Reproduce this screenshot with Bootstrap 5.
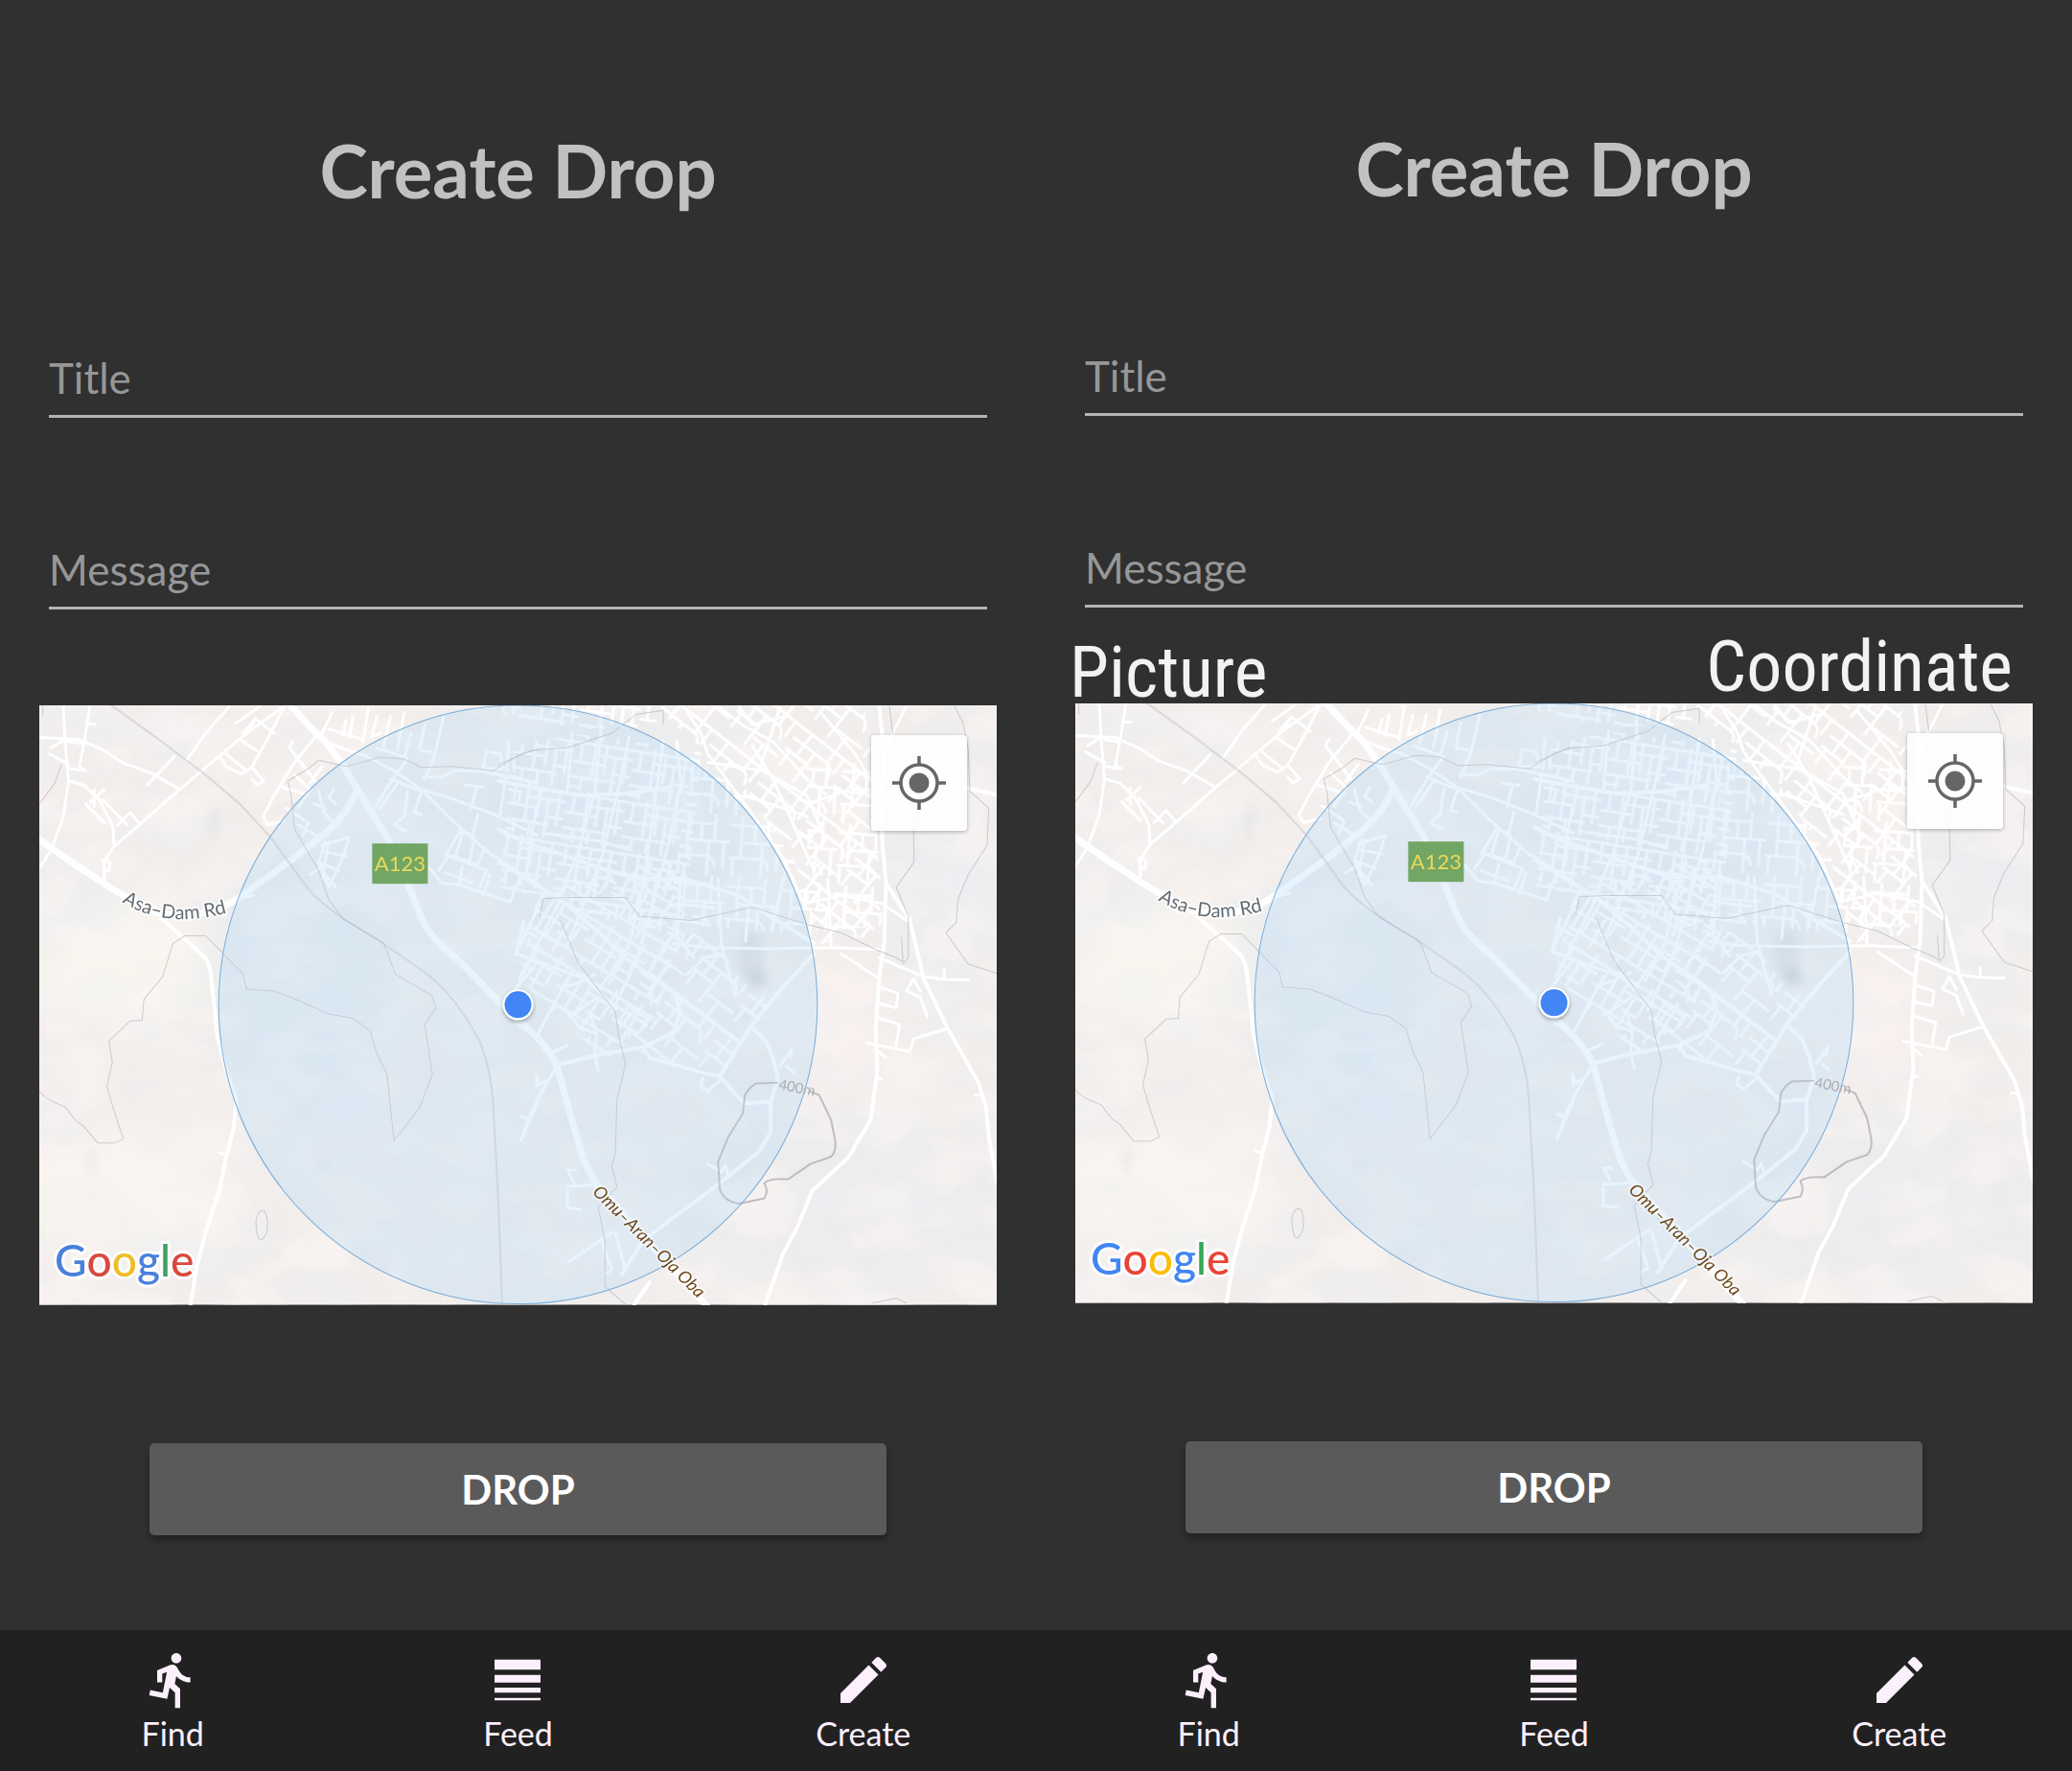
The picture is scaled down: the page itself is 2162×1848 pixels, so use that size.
<!DOCTYPE html>
<html lang="en">
<head>
<meta charset="utf-8">
<meta name="viewport" content="width=device-width, initial-scale=1">
<title>Create Drop</title>
<link href="https://cdn.jsdelivr.net/npm/bootstrap@5.3.0/dist/css/bootstrap.min.css" rel="stylesheet">
<style>
  body { background: #303030; font-family: Lato, "Open Sans", sans-serif; color: #c1c1c1; }
  .screen { padding-top: 138px; }
  .screen-alt { padding-top: 136px; }
  .screen-title { font-size: 76px; line-height: 80px; font-weight: 700; color: #c1c1c1; margin-bottom: 150px; }
  .fields { padding: 0 51px; gap: 132px; }
  .line-input, .line-input:focus { height: 68px; padding: 0 0 13px; font-size: 44px; line-height: 52px; border: 0; border-bottom: 3px solid #b4b4b4; border-radius: 0; background: transparent; color: #fff; box-shadow: none; }
  .line-input::placeholder { color: #979797; opacity: 1; }
  .caption-row { height: 100px; padding: 0 62px 0 35px; font-family: "Roboto Condensed", "Liberation Sans Narrow", Roboto, sans-serif; font-size: 74px; font-weight: 400; line-height: 64px; color: #f2f2f2; }
  .caption-raised { margin-bottom: 6px; }
  .map-wrap { margin: 0 41px; }
  .map-wrap > svg { display: block; width: 100%; height: auto; }
  .locate { position: absolute; top: 31px; right: 31px; width: 100px; height: 100px; padding: 0; border: 0; border-radius: 4px; background: rgba(255,255,255,.88); box-shadow: 0 1px 4px rgba(0,0,0,.3); }
  .drop-area { padding: 144px 156px 0; }
  .btn-drop { height: 96px; font-size: 42px; font-weight: 700; line-height: 48px; color: #fff; background: #5a5a5b; border: 0; border-radius: 5px; box-shadow: 0 5px 7px rgba(0,0,0,.32); }
  .btn-drop:hover { color: #fff; background: #666667; }
  .tabs { background: #212121; height: 147px; padding-top: 20px; }
  .tabs a { color: #fdf0fd; font-size: 34px; line-height: 40px; text-decoration: none; gap: 4px; }
  .tabs svg { width: 64px; height: 64px; fill: #fdf0fd; }
  .map-label { font-size: 20px; fill: #626b73; stroke: #fff; stroke-width: 4px; stroke-opacity: .75; paint-order: stroke; stroke-linejoin: round; }
  .map-label-brown { font-size: 18px; font-style: italic; fill: #6d4618; stroke-opacity: .4; }
  .map-logo { font-size: 46px; font-weight: 500; stroke: #fff; stroke-width: 6px; stroke-opacity: .8; paint-order: stroke; stroke-linejoin: round; }
  .road path { vector-effect: non-scaling-stroke; }
</style>
</head>
<body>

<svg width="0" height="0" class="position-absolute" aria-hidden="true">
  <defs>
    <filter id="relief" x="0" y="0" width="100%" height="100%">
      <feTurbulence type="fractalNoise" baseFrequency=".012 .02" numOctaves="4" seed="8"/>
      <feColorMatrix values="0 0 0 0 .83  0 0 0 0 .87  0 0 0 0 .92  3 0 0 0 -1.25"/>
    </filter>
    <filter id="relief2" x="0" y="0" width="100%" height="100%">
      <feTurbulence type="fractalNoise" baseFrequency=".014 .022" numOctaves="3" seed="21"/>
      <feColorMatrix values="0 0 0 0 .98  0 0 0 0 .92  0 0 0 0 .9  0 4 0 0 -1.7"/>
    </filter>
    <filter id="soft" x="-50%" y="-50%" width="200%" height="200%"><feGaussianBlur stdDeviation="22"/></filter>
    <filter id="soft2" x="-50%" y="-50%" width="200%" height="200%"><feGaussianBlur stdDeviation="5"/></filter>
    <filter id="dotshade" x="-50%" y="-50%" width="200%" height="200%"><feDropShadow dx="0" dy="2" stdDeviation="2" flood-opacity=".35"/></filter>
    <clipPath id="frame"><rect width="998" height="625"/></clipPath>
    <pattern id="blockA" width="62" height="54" patternUnits="userSpaceOnUse" patternTransform="rotate(9)">
      <path d="M0 4H62M0 24H34M22 14H62M0 40H48M8 4V24M22 0V40M34 4V34M44 14V54M55 4V40M12 40V54M28 40V54M0 50H12M44 32H62" fill="none" stroke="#fff" stroke-width="3"/>
    </pattern>
    <pattern id="blockB" width="68" height="56" patternUnits="userSpaceOnUse" patternTransform="rotate(31)">
      <path d="M0 6H68M0 28H40M30 18H68M0 46H68M8 6V28M20 0V46M32 6V46M46 18V56M58 0V34M10 46V56M40 36H58" fill="none" stroke="#fff" stroke-width="3"/>
    </pattern>
    <pattern id="blockC" width="64" height="60" patternUnits="userSpaceOnUse" patternTransform="rotate(38)">
      <path d="M0 8H64M0 22H46Q52 24 54 34M0 36H30M30 48H64M14 8V36M28 22V60M44 0V22M44 48V60M56 8V28M6 36V54" fill="none" stroke="#fff" stroke-width="3"/>
    </pattern>
    <pattern id="blockD" width="56" height="64" patternUnits="userSpaceOnUse" patternTransform="rotate(4)">
      <path d="M0 10H40M12 28H56M0 44H34Q40 46 42 56M12 0V44M26 10V28M40 0V28M34 28V64M50 28V56M4 44V64" fill="none" stroke="#fff" stroke-width="3"/>
    </pattern>

    <g id="map-art" clip-path="url(#frame)">
      <rect width="998" height="625" fill="#f2eeec"/>
      <g filter="url(#soft)">
        <ellipse cx="90" cy="270" rx="90" ry="70" fill="#f8f5ef"/>
        <ellipse cx="90" cy="510" rx="110" ry="70" fill="#f8f4ef"/>
        <ellipse cx="30" cy="200" rx="60" ry="20" fill="#ebecee"/>
        <ellipse cx="270" cy="290" rx="100" ry="130" fill="#ebedee"/>
        <ellipse cx="620" cy="110" rx="160" ry="100" fill="#ecedee"/>
        <ellipse cx="850" cy="520" rx="190" ry="100" fill="#eeeded"/>
        <ellipse cx="940" cy="160" rx="60" ry="150" fill="#ededee"/>
        <ellipse cx="820" cy="330" rx="60" ry="60" fill="#f7f0ee"/>
      </g>
      <rect width="998" height="625" filter="url(#relief)" opacity=".4"/>
      <rect width="998" height="625" filter="url(#relief2)" opacity=".5"/>
      <g filter="url(#soft2)" fill="#c4c5cd">
        <ellipse cx="748" cy="285" rx="9" ry="10" opacity=".6"/>
        <ellipse cx="742" cy="262" rx="14" ry="26" opacity=".3"/>
        <ellipse cx="182" cy="120" rx="4" ry="22" opacity=".2"/>
        <ellipse cx="54" cy="475" rx="5" ry="14" opacity=".2"/>
        <ellipse cx="295" cy="478" rx="7" ry="6" opacity=".15"/>
      </g>

      <!-- district streets -->
      <g>
        <path d="M494 42L560 30L690 45L680 160L660 240L480 190Z" fill="url(#blockA)"/>
        <path d="M520 195L660 160L676 232L640 330L590 370L500 285Z" fill="url(#blockB)"/>
        <path d="M660 235L700 240L735 290L765 310L706 388L630 365L600 330Z" fill="url(#blockC)"/>
        <path d="M480 0H650L640 22L560 25L484 10Z" fill="url(#blockA)"/>
        <path d="M676 60L740 90L806 190L805 240L690 230L660 200Z" fill="url(#blockD)"/>
        <path d="M640 0H860L870 60V130L880 200L868 240L808 250L790 170L740 95L690 45Z" fill="url(#blockC)"/>
        <path d="M800 60L868 60L880 230L810 236L800 150Z" fill="url(#blockD)"/>
      </g>

      <!-- western roads -->
      <g class="road" transform="translate(-41 -36) scale(.35714 .43367)" fill="none" stroke="#fff" stroke-linecap="round" stroke-linejoin="round">
        <path stroke-width="7" d="M850 85L900 130L950 170L1000 225L1040 280L1080 335L1130 400L1180 490L1230 595Q1250 630 1290 660L1350 705L1450 790L1520 850"/>
        <path stroke-width="7" d="M100 397L200 455L320 520L440 577Q560 610 690 550L850 455L950 390Q1010 350 1045 285"/>
        <path stroke-width="4" d="M470 595L540 645L600 690Q615 710 618 750L635 880L660 960L690 1030L682 1100L660 1170L640 1250L600 1350L575 1430L555 1530"/>
        <path stroke-width="3" d="M185 85L190 170L200 265L185 350L150 430L115 475M115 160L230 165L300 190L360 222L440 245L525 285M305 500L303 460L330 425L400 375L525 285L640 205L720 150L830 85M205 265L245 275L290 310L330 375L332 415M545 215L600 150L670 85M430 275L510 205M250 235M262 85L248 160L232 230L250 240M255 128H278M190 165L150 185M200 170L240 175M145 200L200 225M205 235L250 240M660 1163L638 1158M250 320L305 365M265 315L305 285M275 325V285M300 310L370 370M345 370L380 340L405 365M300 455L322 462L318 480L302 478"/>
        <path stroke-width="3" d="M640 205L660 230L705 248L735 232L770 265L750 275L735 260M660 200L720 240M700 165L755 195M710 150L745 115L800 150M745 115L730 140M830 85L790 150L735 232M760 85L690 125M855 170L845 185L920 265M930 150L855 225L800 300L768 350L780 370L830 360M860 250L905 285L870 330M825 280L900 300M905 270L940 230M835 330L900 365L885 395M870 370L930 400M930 290L945 340L980 370M975 285L960 305L980 320M915 320L950 330M940 420L1020 400L1000 450L960 520L930 460L950 410M930 460L990 480M945 435L1010 445M960 410L940 500M905 490L940 470M980 520L940 480"/>
        <path stroke-width="3" d="M950 170L1010 190L1070 205L1150 240L1230 285L1330 310L1440 345L1568 395M1230 285L1320 360L1430 440L1568 510M1165 265L1110 330M1190 290L1180 350L1150 370L1185 385M1140 260L1230 290L1210 340L1230 345M960 140L1060 165M1010 120L1000 155M1030 110L1020 160M1075 90L1060 170M1100 110L1085 160L1110 150M1140 110L1120 180M1180 100L1160 190M1200 150L1180 210M1240 130L1225 190L1260 195M1295 110L1270 200L1240 260M970 100L940 150M1100 185L1190 210L1130 280L1095 330M1235 255H1290L1330 240H1400L1568 270M1420 195L1410 235H1470L1460 200L1430 195M1485 170L1480 240M1500 205V240M1360 275L1410 280M1390 285L1375 330M1475 260L1460 345M1485 285L1520 290L1510 320M1395 345L1380 395L1340 385M1300 445L1340 390M1320 445L1395 465L1415 425M1350 390L1330 445M1385 400L1370 460M1280 480L1310 445L1420 480L1400 520M1250 470L1290 510L1340 515L1490 555L1520 490M1300 485L1380 510M1430 490L1410 540M1350 470L1340 510M690 550L740 540"/>
        <path stroke-width="3" d="M1520 620L1568 640M1510 680L1568 700M1530 600L1505 680M1568 700L1500 770M1565 985L1568 1000M1568 1040L1520 1130M1520 1070L1545 1080"/>
      </g>

      <!-- centre and eastern roads -->
      <g class="road" transform="translate(479 -36) scale(.35714 .43367)" fill="none" stroke="#fff" stroke-linecap="round" stroke-linejoin="round">
        <path stroke-width="7" d="M50 835L110 880Q150 915 170 950L190 1010L220 1100L250 1180L285 1235L400 1340L610 1530"/>
        <path stroke-width="4" d="M1110 85L1125 200L1115 320L1120 420L1130 510L1200 600L1240 740L1310 860L1400 990L1422 1050L1430 1120L1455 1230M1130 510L1125 650L1110 740L1100 860L1105 960L1085 1080L1020 1170L915 1250L870 1340L830 1400L775 1530M440 1470L390 1530M1310 270L1460 300"/>
        <path stroke-width="4" d="M170 948L280 925L420 905L510 870L530 820L510 770M420 905L440 930L590 965L645 975L715 1040L790 1035M645 975L735 855L830 760L920 680M735 855L780 890L800 930L815 980L793 1040V1110L760 1155L640 1235L500 1320L420 1370L360 1450M0 265L130 285L240 300L370 295L500 280M0 380L70 410L180 440L280 470L400 500L540 500L700 540L850 620L920 655M0 460L80 500L180 550L280 620L370 690L470 750L600 830L700 890"/>
        <path stroke-width="3" d="M170 950L120 1020L90 1070L65 1130M70 1070L90 1080M110 975L120 995L140 985M590 1000L610 1010L645 985M595 980L590 1000M610 1185L650 1205L660 1190L670 1210M820 950L855 910L850 930M840 950L860 965M1110 670L970 665L780 668L600 665L510 655M1000 680L1110 740M1110 690L1240 735L1300 742L1370 743M1300 718V742M1230 770L1210 740L1190 770L1230 785L1250 830M1110 760L1165 775L1160 810L1110 800M1110 835L1170 850L1160 900M1075 895L1200 915L1210 885L1310 860M1100 910L1130 930M1105 980H1118M1390 1020H1415"/>
        <path stroke-width="3" d="M50 680L120 700L250 740L330 800L430 850M120 560L50 680M130 390L300 410L380 430M110 330L90 420L80 490M300 130L280 290L230 440L180 540M215 150L200 290M380 160L350 280L300 450L200 660M480 170L450 350L420 520L380 660L290 770M520 170L530 270L500 400L450 560L400 700L330 820M180 550L60 740M550 100L590 150L610 200L700 300L830 450L890 560M640 85L710 130L800 170L900 260M610 220L770 240L900 300L950 400M720 300L900 350M740 180L800 260L920 480M890 560L1000 540L1120 560L1190 600M940 100L1040 200L1100 280M1190 85L1150 150L1120 200M820 90L760 240M900 320L1010 290L1120 300M960 500L970 660M530 500L520 640L570 690M640 500L650 660L690 780M550 730L600 690L650 680M730 560L720 650M830 500L800 620M520 560L630 570M530 600L610 610M700 85L740 130L830 110M200 820L240 860L210 830M190 760L230 750L280 730M280 790L205 830M265 820L285 870L280 920L290 960M240 860L280 870M110 880L200 740M150 920L200 900M200 1240L280 1235M225 1200L200 1200L220 1230M200 1290L240 1295M200 1250V1290M205 1420L330 1350M300 1370L330 1440L310 1450M340 1350L370 1440"/>
      </g>

      <!-- rail lines, boundaries and contours -->
      <g class="road" transform="translate(-41 -36) scale(.35714 .43367)" fill="none" stroke="#c8c3c8" stroke-opacity=".55" stroke-linejoin="round">
        <path stroke-width="2" d="M320 80L480 175L600 250L700 320L790 400L900 525Q960 580 1100 645L1240 725Q1330 780 1400 890Q1435 960 1440 1050L1455 1280L1466 1530"/>
        <path stroke-width="1" stroke="#b4a8ae" d="M115 1010Q130 1030 190 1048L220 1080L245 1095L285 1135H335L360 1125L330 1050L312 1000L328 940L318 890L380 842L415 840L420 790L475 735L505 655L540 637H600L640 670L710 730L720 765L800 770L850 785L960 825L1030 835L1080 865L1100 920L1130 970L1150 1130L1225 1050L1262 970L1240 850L1272 810L1260 780L1155 730L1120 655L1000 595L960 550L930 480L860 380L850 300L840 265L900 235L930 215L1010 230L1110 208L1180 212L1230 232L1320 230L1440 240L1520 200L1568 190M180 225L160 270L115 320M125 80V110M765 1297Q750 1300 747 1325Q750 1370 763 1368Q782 1360 781 1325Q778 1297 765 1297"/>
      </g>
      <g class="road" transform="translate(479 -36) scale(.35714 .43367)" fill="none" stroke="#aca7af" stroke-opacity=".55" stroke-linejoin="round">
        <path stroke-width="1" d="M0 225L100 190L200 185L330 150L400 105L480 95V130M120 590L130 548L200 545H370L410 590L560 600L740 568L900 610L1000 630L1100 670L1160 690L1180 700L1175 640M180 600L230 700L340 820L350 880L370 945L345 1030L340 1160L330 1190L345 1240L290 1290L310 1370V1480L370 1523M1140 85L1150 150M1330 85L1355 125L1370 190L1375 290L1430 330L1425 420L1370 490L1340 550L1335 605L1305 630L1370 705L1455 728M1210 350L1212 460L1160 520L1195 590V690L1180 705M1090 1520L1160 1508L1190 1520"/>
        <path stroke-width="2" stroke="#98929c" d="M815 990L750 992Q725 1005 718 1022L712 1065L670 1120L640 1180L645 1245Q655 1275 700 1281L775 1268Q788 1250 775 1232Q785 1220 845 1222L910 1185L970 1168Q985 1155 982 1130L970 1080L935 1020L905 1010"/>
      </g>
      <circle cx="499" cy="312" r="312" fill="#a9d8f7" fill-opacity=".27" stroke="#79acd9" stroke-width="1"/>
      <g filter="url(#dotshade)"><circle cx="499" cy="312" r="16" fill="#fff"/></g>
      <circle cx="499" cy="312" r="14" fill="#4285f4"/>
      <rect x="347" y="144" width="58" height="42" fill="#72a664"/>
    </g>

    <path id="curve-asa" d="M86 205Q132 234 196 216"/>
    <path id="curve-omu" d="M576 508L700 632"/>

    <symbol id="ic-run" viewBox="0 0 24 24"><path d="M13.49 5.48c1.1 0 2-.9 2-2s-.9-2-2-2-2 .9-2 2 .9 2 2 2zm-3.6 13.9l1-4.4 2.1 2v6h2v-7.5l-2.1-2 .6-3c1.3 1.5 3.3 2.5 5.5 2.5v-2c-1.9 0-3.5-1-4.3-2.4l-1-1.6c-.4-.6-1-1-1.7-1-.3 0-.5.1-.8.1l-5.2 2.2v4.7h2v-3.4l1.8-.7-1.6 8.1-4.9-1-.4 2 7 1.4z"/></symbol>
    <symbol id="ic-feed" viewBox="0 0 24 24"><path d="M3 17h18v-2H3v2zm0 3h18v-1H3v1zm0-7h18v-3H3v3zm0-9v4h18V4H3z"/></symbol>
    <symbol id="ic-edit" viewBox="0 0 24 24"><path d="M3 17.25V21h3.75L17.81 9.94l-3.75-3.75L3 17.25zM20.71 7.04c.39-.39.39-1.02 0-1.41l-2.34-2.34c-.39-.39-1.02-.39-1.41 0l-1.83 1.83 3.75 3.75 1.83-1.83z"/></symbol>
    <symbol id="ic-locate" viewBox="0 0 100 100"><g fill="none" stroke="#666" stroke-width="3.5"><circle cx="50" cy="50" r="19"/><path d="M50 22v9M50 69v9M22 50h9M69 50h9"/></g><circle cx="50" cy="50" r="10.5" fill="#666"/></symbol>
  </defs>
</svg>

<div class="row g-0">
  <div class="col-6 d-flex flex-column min-vh-100">
    <main class="screen">
      <h1 class="screen-title text-center">Create Drop</h1>
      <form class="fields d-flex flex-column">
        <input class="form-control line-input" type="text" placeholder="Title" aria-label="Title">
        <input class="form-control line-input" type="text" placeholder="Message" aria-label="Message">
      </form>
      <div class="caption-row"></div>
      <div class="map-wrap position-relative">
        <svg viewBox="0 0 998 625" role="img" aria-label="Map">
          <use href="#map-art"/>
          <text x="376" y="173" text-anchor="middle" font-size="22" fill="#ead95a">A123</text>
          <text class="map-label"><textPath href="#curve-asa">Asa–Dam Rd</textPath></text>
          <text class="map-label map-label-brown"><textPath href="#curve-omu">Omu–Aran–Oja Oba</textPath></text>
          <text x="770" y="400" font-size="15" fill="#a9adb5" transform="rotate(11 770 400)">400m</text>
          <text class="map-logo" x="16" y="595"><tspan fill="#4a80dc">G</tspan><tspan fill="#d8493e">o</tspan><tspan fill="#efbd27">o</tspan><tspan fill="#4a80dc">g</tspan><tspan fill="#40a060">l</tspan><tspan fill="#d8493e">e</tspan></text>
        </svg>
        <button class="locate" type="button" aria-label="My location"><svg width="100" height="100"><use href="#ic-locate"/></svg></button>
      </div>
      <div class="drop-area"><button class="btn btn-drop w-100" type="button">DROP</button></div>
    </main>
    <nav class="tabs d-flex mt-auto">
      <a class="d-flex flex-column align-items-center flex-fill w-100" href="#find"><svg><use href="#ic-run"/></svg>Find</a>
      <a class="d-flex flex-column align-items-center flex-fill w-100" href="#feed"><svg><use href="#ic-feed"/></svg>Feed</a>
      <a class="d-flex flex-column align-items-center flex-fill w-100" href="#create"><svg><use href="#ic-edit"/></svg>Create</a>
    </nav>
  </div>

  <div class="col-6 d-flex flex-column min-vh-100">
    <main class="screen-alt">
      <h1 class="screen-title text-center">Create Drop</h1>
      <form class="fields d-flex flex-column">
        <input class="form-control line-input" type="text" placeholder="Title" aria-label="Title">
        <input class="form-control line-input" type="text" placeholder="Message" aria-label="Message">
      </form>
      <div class="caption-row d-flex justify-content-between align-items-end">
        <span>Picture</span>
        <span class="caption-raised">Coordinate</span>
      </div>
      <div class="map-wrap position-relative">
        <svg viewBox="0 0 998 625" role="img" aria-label="Map">
          <use href="#map-art"/>
          <text x="376" y="173" text-anchor="middle" font-size="22" fill="#ead95a">A123</text>
          <text class="map-label"><textPath href="#curve-asa">Asa–Dam Rd</textPath></text>
          <text class="map-label map-label-brown"><textPath href="#curve-omu">Omu–Aran–Oja Oba</textPath></text>
          <text x="770" y="400" font-size="15" fill="#a9adb5" transform="rotate(11 770 400)">400m</text>
          <text class="map-logo" x="16" y="595"><tspan fill="#4285f4">G</tspan><tspan fill="#ea4335">o</tspan><tspan fill="#fbbc05">o</tspan><tspan fill="#4285f4">g</tspan><tspan fill="#34a853">l</tspan><tspan fill="#ea4335">e</tspan></text>
        </svg>
        <button class="locate" type="button" aria-label="My location"><svg width="100" height="100"><use href="#ic-locate"/></svg></button>
      </div>
      <div class="drop-area"><button class="btn btn-drop w-100" type="button">DROP</button></div>
    </main>
    <nav class="tabs d-flex mt-auto">
      <a class="d-flex flex-column align-items-center flex-fill w-100" href="#find"><svg><use href="#ic-run"/></svg>Find</a>
      <a class="d-flex flex-column align-items-center flex-fill w-100" href="#feed"><svg><use href="#ic-feed"/></svg>Feed</a>
      <a class="d-flex flex-column align-items-center flex-fill w-100" href="#create"><svg><use href="#ic-edit"/></svg>Create</a>
    </nav>
  </div>
</div>
<script src="https://cdn.jsdelivr.net/npm/bootstrap@5.3.0/dist/js/bootstrap.bundle.min.js"></script>
</body>
</html>
